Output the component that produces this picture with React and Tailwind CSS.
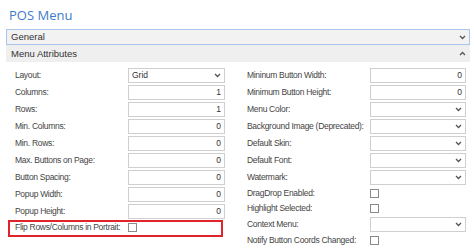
import React from "react";

const font = { fontFamily: '"Liberation Sans", Arial, sans-serif' };

function Chevron({ up = false }) {
  return (
    <svg width="7" height="5" viewBox="0 0 7 5" className="shrink-0">
      <path
        d={up ? "M1 4 L3.5 1.5 L6 4" : "M1 1 L3.5 3.5 L6 1"}
        fill="none"
        stroke="#555"
        strokeWidth="1.3"
      />
    </svg>
  );
}

function TextInput({ value = "" }) {
  return (
    <div className="h-[15px] border border-[#cfcfcf] bg-white flex items-center justify-end pr-[3px] text-[8.5px] text-[#333] leading-none">
      {value}
    </div>
  );
}

function SelectInput({ value = "" }) {
  return (
    <div className="h-[15px] border border-[#cfcfcf] bg-white flex items-center justify-between pl-[3px] pr-[3px] text-[8.5px] text-[#333] leading-none">
      <span>{value}</span>
      <Chevron />
    </div>
  );
}

function Checkbox() {
  return <div className="w-[9px] h-[9px] border border-[#8a8a8a] bg-white" />;
}

function Row({ label, labelW, inputW, type, value }) {
  const tall = type !== "check";
  return (
    <div className={`flex items-center ${tall ? "h-[17px]" : "h-[15px]"}`}>
      <div
        className="shrink-0 text-[8.5px] text-[#444] leading-none whitespace-nowrap tracking-[-0.3px]"
        style={{ width: labelW }}
      >
        {label}
      </div>
      <div style={{ width: inputW }} className="shrink-0">
        {type === "text" && <TextInput value={value} />}
        {type === "select" && <SelectInput value={value} />}
        {type === "check" && <Checkbox />}
      </div>
    </div>
  );
}

const left = [
  ["Layout:", "select", "Grid"],
  ["Columns:", "text", "1"],
  ["Rows:", "text", "1"],
  ["Min. Columns:", "text", "0"],
  ["Min. Rows:", "text", "0"],
  ["Max. Buttons on Page:", "text", "0"],
  ["Button Spacing:", "text", "0"],
  ["Popup Width:", "text", "0"],
  ["Popup Height:", "text", "0"],
];

const right = [
  ["Mininum Button Width:", "text", "0"],
  ["Minimum Button Height:", "text", "0"],
  ["Menu Color:", "select", ""],
  ["Background Image (Deprecated):", "select", ""],
  ["Default Skin:", "select", ""],
  ["Default Font:", "select", ""],
  ["Watermark:", "select", ""],
  ["DragDrop Enabled:", "check", ""],
  ["Highlight Selected:", "check", ""],
  ["Context Menu:", "select", ""],
  ["Notify Button Coords Changed:", "check", ""],
];

export default function App() {
  return (
    <div className="w-[474px] h-[248px] bg-white overflow-hidden" style={font}>
      <div
        className="pl-[9px] pt-[7px] h-[29px] text-[13px] leading-[16px] text-[#3d7cc9]"
        style={{ fontFamily: '"Open Sans", sans-serif' }}
      >
        POS Menu
      </div>
      <div className="mx-[6px] w-[464px] h-[16px] border border-[#a9c5ea] bg-[#f2f2f2] flex items-center justify-between pl-[4px] pr-[3px] text-[9.5px] text-[#333] leading-none">
        <span>General</span>
        <Chevron />
      </div>
      <div className="mx-[6px] w-[464px] h-[17px] bg-[#efefef] flex items-center justify-between pl-[5px] pr-[4px] text-[9.5px] text-[#333] leading-none">
        <span>Menu Attributes</span>
        <Chevron up />
      </div>
      <div className="flex pt-[5px]">
        <div className="pl-[15px] w-[247px] shrink-0">
          {left.map(([l, t, v]) => (
            <Row key={l} label={l} labelW={113} inputW={97} type={t} value={v} />
          ))}
          <div className="relative">
            <Row label="Flip Rows/Columns in Portrait:" labelW={113} inputW={97} type="check" />
            <div className="absolute left-[-7px] top-0 w-[215px] h-[17px] border-2 border-[#e0242b]" />
          </div>
        </div>
        <div>
          {right.map(([l, t, v]) => (
            <Row key={l} label={l} labelW={123} inputW={96} type={t} value={v} />
          ))}
        </div>
      </div>
    </div>
  );
}
